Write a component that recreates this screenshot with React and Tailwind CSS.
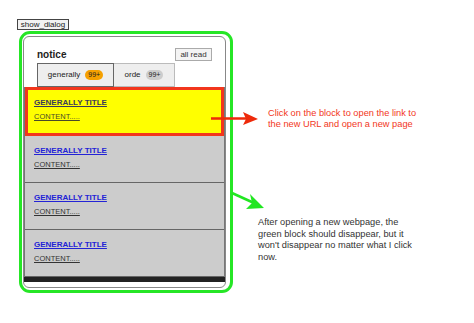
import React from "react";

const items = [
  { id: 1, active: true },
  { id: 2, active: false },
  { id: 3, active: false },
  { id: 4, active: false },
];

function NoticeItem({ active }) {
  if (active) {
    return (
      <div className="h-[49px] border-[3px] border-[#f2361c] bg-[#ffff00] pl-[6px] pt-[7px]">
        <p className="text-[8px] leading-[12px] font-bold underline text-[#3a3a5c]">GENERALLY TITLE</p>
        <p className="mt-[2px] text-[7.5px] leading-[12px] underline text-[#4a4a2a]">CONTENT.....</p>
      </div>
    );
  }
  return (
    <div className="h-[47px] border-b border-[#666] bg-[#cccccc] pl-[9px] pt-[9px]">
      <p className="text-[8px] leading-[12px] font-bold underline text-[#2323d6]">GENERALLY TITLE</p>
      <p className="mt-[2px] text-[7.5px] leading-[12px] underline text-[#333]">CONTENT.....</p>
    </div>
  );
}

export default function App() {
  return (
    <div className="relative w-[474px] h-[323px] overflow-hidden bg-white font-['Liberation_Sans',Arial,sans-serif] text-[#222]">
      <div className="pl-[17px] pt-[19px]">
        <button className="flex h-[11px] w-[52px] items-center justify-center border border-[#444] bg-[#f2f2f2] text-[8px] leading-none text-[#222]">
          show_dialog
        </button>

        {/* dialog */}
        <div className="ml-[2px] mt-[1px] h-[262px] w-[214px] rounded-[11px] border-[3px] border-[#26e626]">
          <div className="ml-[1px] mt-[2px] flex h-[252px] w-[203px] flex-col overflow-hidden rounded-[6px] border border-[#888] bg-white">
            <div className="flex items-center justify-between px-[13px] pt-[11px]">
              <span className="text-[10px] font-bold leading-none text-[#222]">notice</span>
              <button className="flex h-[13px] w-[37px] items-center justify-center border border-[#aaa] bg-[#f4f4f4] text-[8px] leading-none text-[#333]">
                all read
              </button>
            </div>
            <div className="mt-[2px] flex pl-[13px]">
              <div className="flex h-[24px] w-[77px] items-center justify-center gap-[5px] border border-[#666] bg-[#eeeeee] text-[8px]">
                <span>generally</span>
                <span className="rounded-full bg-[#f5a000] px-[3px] py-[1px] text-[7px] leading-[8px]">99+</span>
              </div>
              <div className="flex h-[24px] w-[61px] items-center justify-center gap-[5px] border border-l-0 border-[#bbb] bg-[#eeeeee] text-[8px]">
                <span>orde</span>
                <span className="rounded-full bg-[#cccccc] px-[3px] py-[1px] text-[7px] leading-[8px]">99+</span>
              </div>
            </div>
            <div className="flex flex-col border-x border-[#777]">
              {items.map((it) => (
                <NoticeItem key={it.id} active={it.active} />
              ))}
            </div>
            <div className="h-[5px] bg-[#222]" />
          </div>
        </div>
      </div>

      {/* annotations */}
      <svg className="absolute left-0 top-0" width="474" height="323">
        <line x1="211" y1="118.5" x2="246" y2="118.5" stroke="#ee2a0a" strokeWidth="2.5" />
        <polygon points="243,112 258,119 243,125 246,119" fill="#ee2a0a" />
        <line x1="232" y1="193" x2="254" y2="203" stroke="#22e622" strokeWidth="2.5" />
        <polygon points="250,194 264,208 246,209 252,203" fill="#22e622" />
      </svg>
      <p className="absolute left-[268px] top-[108px] w-[160px] text-[9.25px] leading-[11px] text-[#f2361c]">
        Click on the block to open the link to the new URL and open a new page
      </p>
      <p className="absolute left-[258px] top-[217px] w-[160px] text-[9.25px] leading-[11.5px] text-[#333]">
        After opening a new webpage, the green block should disappear, but it won't disappear no matter what I click now.
      </p>
    </div>
  );
}
